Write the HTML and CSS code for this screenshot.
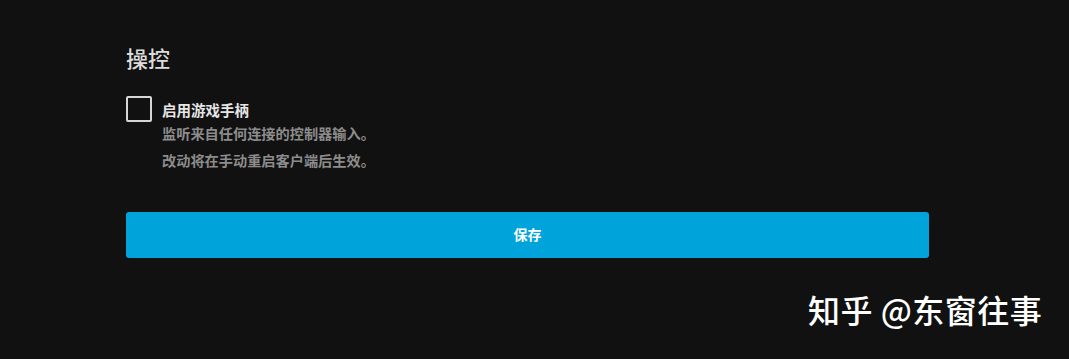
FILE: index.html
```html
<!DOCTYPE html>
<html>
<head>
<meta charset="utf-8">
<link rel="stylesheet" href="styles.css">
</head>
<body>
<div class="page">
  <h2 class="title">操控</h2>
  <div class="option">
    <div class="checkbox"></div>
    <div class="option-text">
      <div class="label">启用游戏手柄</div>
      <div class="desc">监听来自任何连接的控制器输入。</div>
      <div class="desc">改动将在手动重启客户端后生效。</div>
    </div>
  </div>
  <button class="save">保存</button>
  <div class="watermark">知乎 @东窗往事</div>
</div>
</body>
</html>
```

FILE: styles.css
```css
html, body {
  margin: 0;
  padding: 0;
  background: #111111;
  width: 1069px;
  height: 359px;
  overflow: hidden;
  font-family: "Noto Sans CJK SC", "Noto Sans", sans-serif;
}
.page {
  padding: 43px 0 0 126px;
  width: 803px;
  display: flex;
  flex-direction: column;
}
.title {
  margin: 0;
  font-size: 22px;
  line-height: 28px;
  font-weight: 500;
  color: #dcdcdc;
}
.option {
  display: flex;
  gap: 10px;
  margin-top: 25px;
}
.checkbox {
  width: 22px;
  height: 22px;
  border: 2px solid #d6d6d6;
  border-radius: 2px;
  flex: none;
}
.option-text {
  display: flex;
  flex-direction: column;
  padding-top: 4px;
}
.label {
  font-size: 14.5px;
  line-height: 20px;
  font-weight: 700;
  color: #e6e6e6;
}
.desc {
  font-size: 14.2px;
  line-height: 27px;
  font-weight: 700;
  color: #8c8c8c;
}
.save {
  margin-top: 38px;
  height: 46px;
  width: 803px;
  padding: 0 0 3px 0;
  border: none;
  border-radius: 3px;
  background: #00a4db;
  color: #ffffff;
  font-family: "Noto Sans CJK SC", sans-serif;
  font-size: 14px;
  font-weight: 700;
}
.watermark {
  align-self: flex-start;
  margin: 31px 0 0 682px;
  white-space: nowrap;
  font-size: 32px;
  line-height: 40px;
  letter-spacing: 0.5px;
  font-weight: 500;
  color: #ffffff;
}
```
